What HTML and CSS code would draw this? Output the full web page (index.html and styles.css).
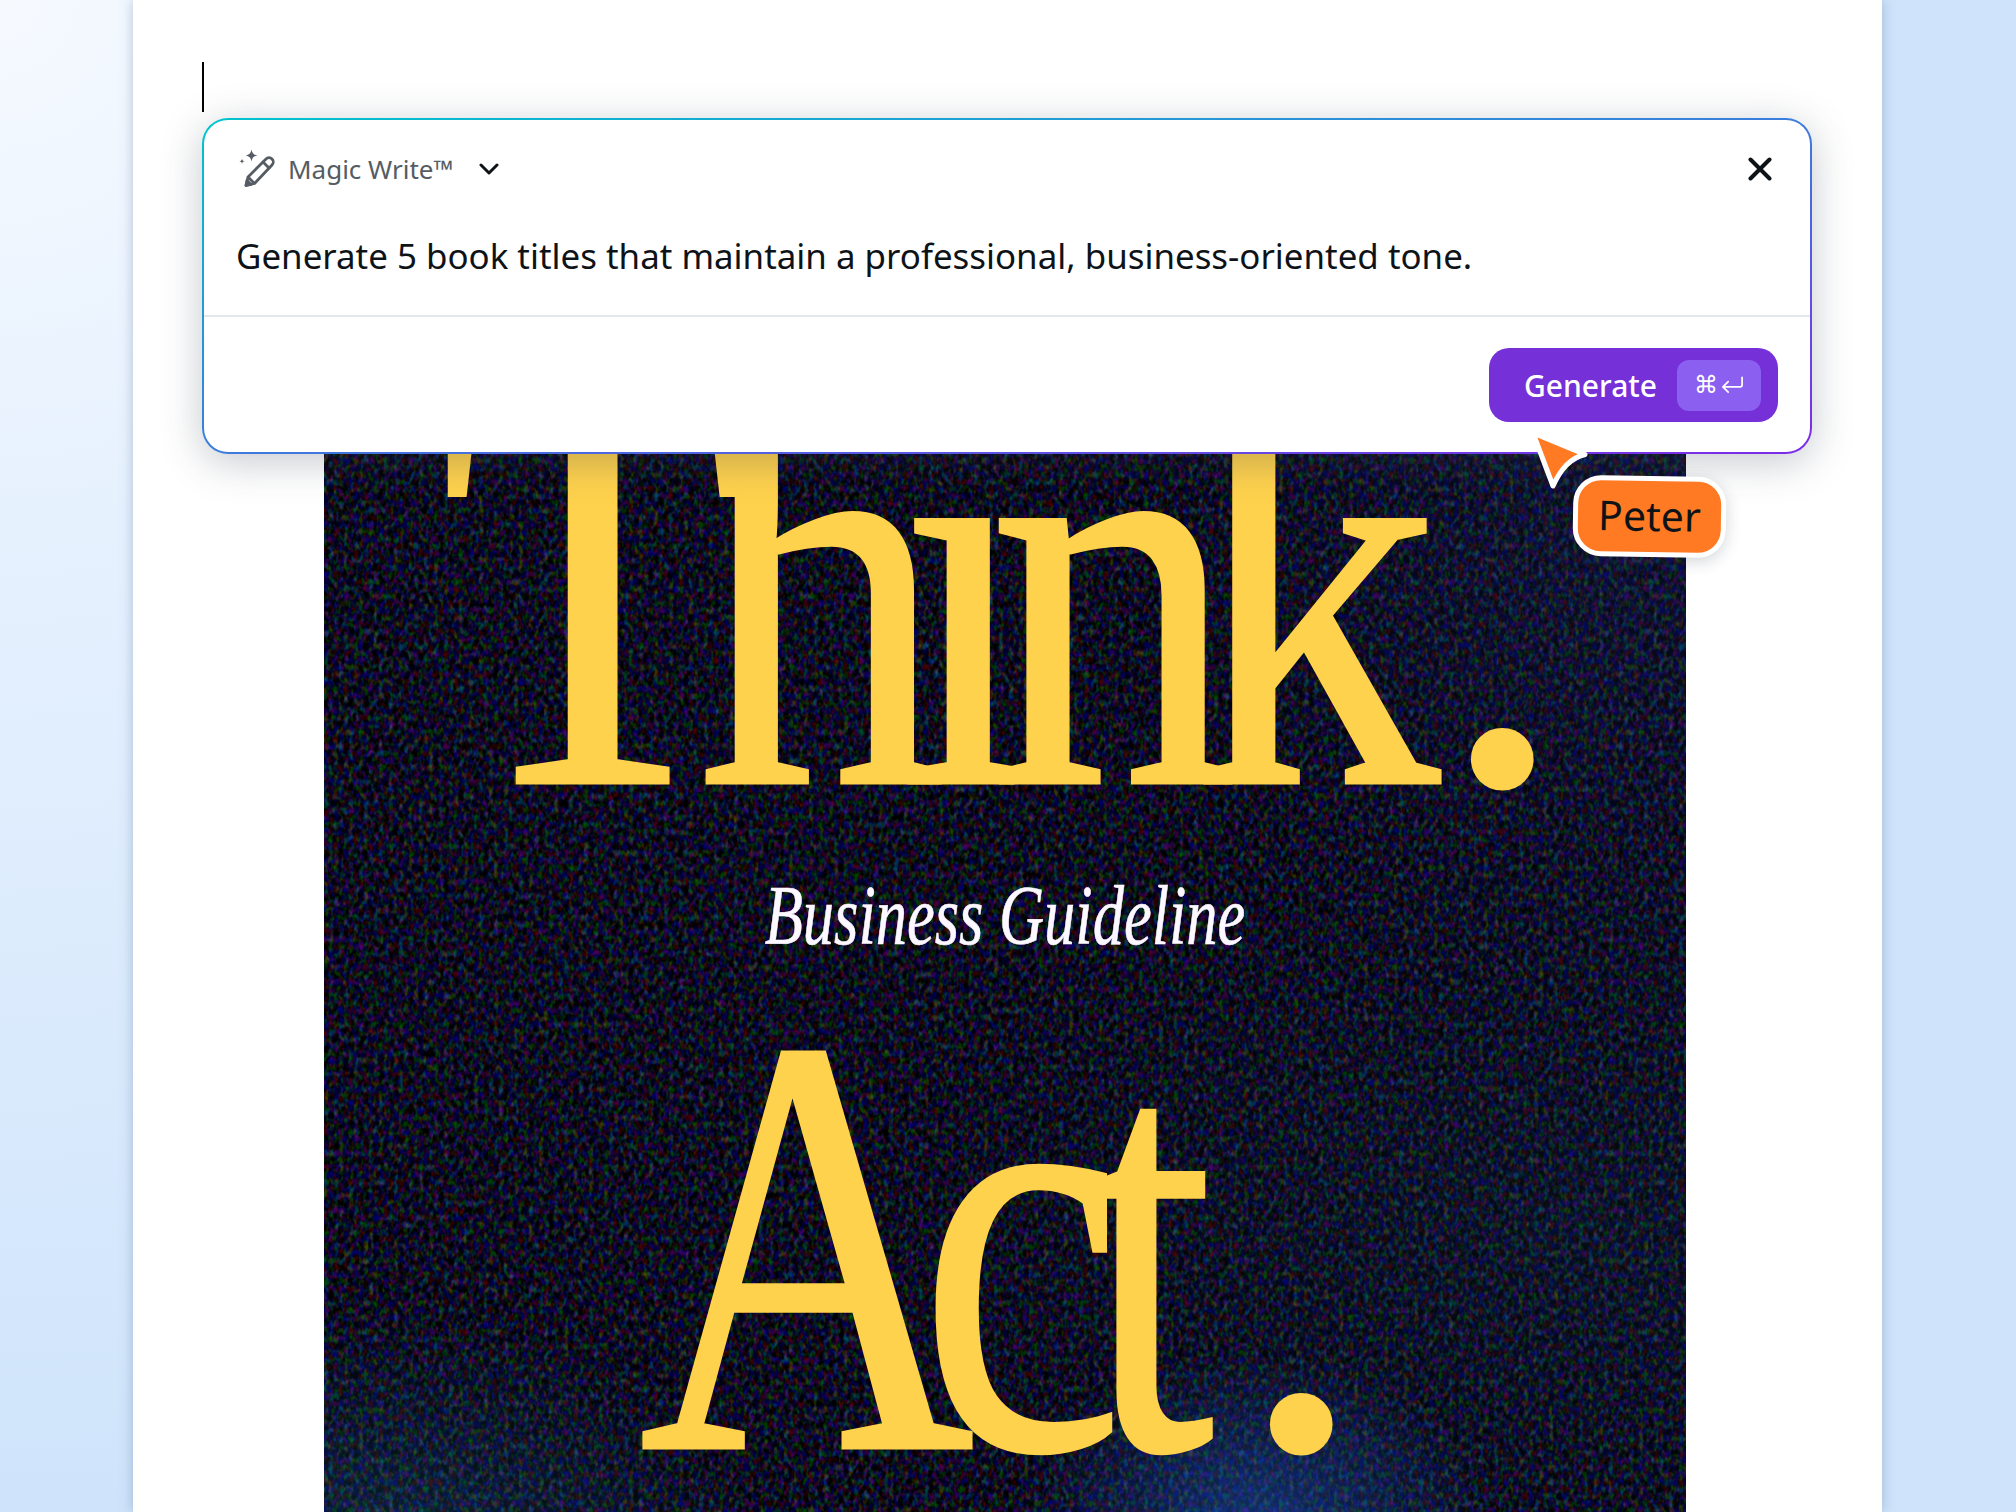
FILE: index.html
```html
<!DOCTYPE html>
<html lang="en">
<head>
<meta charset="utf-8">
<title>Magic Write</title>
<link rel="stylesheet" href="styles.css">
</head>
<body>
<main class="sheet">
  <div class="caret"></div>
  <section class="card">
    <header class="card-head">
      <div class="tool">
        <svg class="wand" viewBox="0 0 40 40" fill="none" stroke="#555c63" stroke-width="2.800" stroke-linejoin="round" stroke-linecap="round">
          <path d="M9 36.500l2-8.500L29 10a4.200 4.200 0 0 1 6 6L17.500 34.500z"/>
          <path d="M26 13l6 6M11.500 28.500l5.500 5.500"/>
          <path d="M9 36.500l1-5 4 4z" fill="#555c63"/>
          <path d="M14.500 0.500c.8 4 2.200 5.300 6 6-3.800.7-5.200 2-6 6-.8-4-2.200-5.300-6-6 3.800-.7 5.200-2 6-6z" fill="#555c63" stroke="none"/>
          <path d="M5 9.500c.3 1.900.9 2.500 2.800 2.800-1.900.3-2.500.9-2.800 2.800-.3-1.900-.9-2.500-2.800-2.800 1.900-.3 2.500-.9 2.800-2.800z" fill="#555c63" stroke="none"/>
        </svg>
        <span class="tool-name">Magic Write™</span>
        <svg class="chevron" viewBox="0 0 20 14" fill="none" stroke="#0e1318" stroke-width="3" stroke-linecap="round" stroke-linejoin="round"><path d="M2 3l8 8 8-8"/></svg>
      </div>
      <svg class="close" viewBox="0 0 24 24" fill="none" stroke="#0e1318" stroke-width="4" stroke-linecap="round"><path d="M2.500 2.500l19 19M21.500 2.500l-19 19"/></svg>
    </header>
    <p class="prompt">Generate 5 book titles that maintain a professional, business-oriented tone.</p>
    <div class="divider"></div>
    <footer class="card-foot">
      <button class="generate">
        <span>Generate</span>
        <span class="shortcut">
          <span class="cmd">⌘</span>
          <svg class="enter" viewBox="0 0 24 18" fill="none" stroke="#fff" stroke-width="1.800" stroke-linecap="round" stroke-linejoin="round"><path d="M22 1v8a2 2 0 0 1-2 2H2M7.500 5.500L2 11l5.500 5.500"/></svg>
        </span>
      </button>
    </footer>
  </section>
  <section class="book">
    <svg class="noise" xmlns="http://www.w3.org/2000/svg" width="100%" height="100%">
      <filter id="grain" x="0" y="0" width="100%" height="100%" color-interpolation-filters="sRGB">
        <feTurbulence type="fractalNoise" baseFrequency="0.2 0.14" numOctaves="2" seed="7"/>
        <feColorMatrix type="matrix" values="0.750 0 0 0 -0.335  0 0.750 0 0 -0.335  0 0 0.950 0 -0.345  0 0 0 0 1"/>
      </filter>
      <rect width="100%" height="100%" fill="#000" filter="url(#grain)"/>
    </svg>
    <div class="glow"></div>
    <div class="title title-think"><span class="word">Th<span class="stem">i</span>nk</span><span class="dot">.</span></div>
    <div class="subtitle">Business Guideline</div>
    <div class="title title-act"><span class="word"><span class="kern-a">A</span>ct</span><span class="dot">.</span></div>
  </section>
  <div class="cursor">
    <svg class="pointer" viewBox="0 0 60 60"><path d="M3 3L55 24.500Q35 29 23 56Z" fill="#ff7a23" stroke="#fff" stroke-width="5" stroke-linejoin="round"/></svg>
    <div class="cursor-label">Peter</div>
  </div>
</main>
</body>
</html>
```
FILE: styles.css
```css
* { box-sizing: border-box; }
html, body { margin: 0; height: 100%; }
body {
  width: 2016px;
  height: 1512px;
  overflow: hidden;
  background: radial-gradient(circle 1500px at 0 0, #f6faff 0%, #e6f1fe 35%, #cfe4fb 100%);
  font-family: "Noto Sans", sans-serif;
}
.sheet {
  position: relative;
  width: 1749px;
  height: 1512px;
  margin-left: 133px;
  padding: 62px 69px 0;
  background: #fff;
  box-shadow: 0 0 12px rgba(70, 100, 140, .35);
}
.caret { width: 2px; height: 50px; background: #000; }
.card {
  position: relative;
  z-index: 2;
  width: 1610px;
  height: 336px;
  margin-top: 6px;
  border: 2px solid transparent;
  border-radius: 26px;
  background:
    linear-gradient(#fff, #fff) padding-box,
    linear-gradient(to bottom right, #00c4cc 0%, #3c7cdd 50%, #7d2ae8 100%) border-box;
  box-shadow: 0 8px 40px rgba(50, 60, 80, .28);
  display: flex;
  flex-direction: column;
}
.card-head {
  display: flex;
  align-items: center;
  justify-content: space-between;
  height: 76px;
  padding: 0 38px 0 33px;
  margin-top: 11px;
  flex: none;
}
.tool { display: flex; align-items: center; }
.wand { width: 40px; height: 40px; }
.tool-name { margin-left: 11px; font-size: 26px; color: #555c63; }
.chevron { width: 20px; height: 14px; margin-left: 25px; }
.close { width: 24px; height: 24px; }
.prompt {
  margin: 0;
  padding: 0 32px;
  font-size: 34.900px;
  line-height: 46px;
  color: #0e1318;
  height: 65px;
  margin-top: 26px;
  flex: none;
}
.divider { height: 2px; background: #e3e6ea; flex: none; margin-top: 17px; }
.card-foot { display: flex; justify-content: flex-end; padding: 31px 32px 0 0; }
.generate {
  display: flex;
  align-items: center;
  justify-content: space-between;
  width: 289px;
  height: 74px;
  padding: 0 17px 0 35px;
  border: 0;
  border-radius: 20px;
  background: #7630d8;
  color: #fff;
  font: 500 30px "Noto Sans", sans-serif;
}
.shortcut {
  display: flex;
  align-items: center;
  justify-content: center;
  gap: 3px;
  width: 84px;
  height: 51px;
  border-radius: 12px;
  background: #8b5fef;
}
.cmd { font: 24px "DejaVu Sans", sans-serif; }
.enter { width: 23px; height: 18px; }
.book {
  position: relative;
  z-index: 1;
  width: 1362px;
  height: 1226px;
  margin: -168px 0 0 122px;
  background: #05052a;
  overflow: hidden;
  font-family: "Liberation Serif", serif;
  font-kerning: none;
}
.noise { position: absolute; inset: 0; }
.glow {
  position: absolute;
  inset: 0;
  background:
    radial-gradient(240px 170px at 930px 1235px, rgba(30, 90, 190, .5), transparent 100%),
    radial-gradient(400px 280px at 60px 1300px, rgba(30, 110, 150, .32), transparent 100%),
    radial-gradient(500px 500px at 1300px 250px, rgba(30, 50, 110, .24), transparent 100%),
    radial-gradient(700px 400px at 1250px 950px, rgba(20, 60, 90, .2), transparent 100%);
}
.title {
  position: relative;
  display: flex;
  align-items: baseline;
  height: 596px;
  font-size: 596px;
  line-height: 596px;
  color: #ffd24d;
  white-space: nowrap;
}
.word { display: block; transform-origin: left center; -webkit-text-stroke: 3px #ffd24d; }
.stem { display: inline-block; clip-path: inset(205px -30px 0 -30px); }
.dot { font-size: 530px; }
.title-think { padding-left: 116px; margin-top: 6px; font-size: 574px; }
.title-think .word { width: 996px; letter-spacing: -56px; transform: scaleX(.872); }
.title-act { padding-left: 315px; margin-top: -17px; font-size: 600px; }
.title-act .word { width: 596px; letter-spacing: -52px; transform: scaleX(.775); }
.kern-a { letter-spacing: -72px; }
.subtitle {
  position: relative;
  margin-top: -23px;
  height: 100px;
  font-size: 85px;
  line-height: 100px;
  font-style: italic;
  text-align: center;
  color: #fdf8ff;
  white-space: nowrap;
  transform: scaleX(.735);
  -webkit-text-stroke: .6px #fdf8ff;
}
.cursor { position: absolute; z-index: 3; left: 1397px; top: 430px; }
.pointer { display: block; width: 60px; height: 60px; overflow: visible; }
.cursor-label {
  position: absolute;
  left: 43px;
  top: 46px;
  width: 153px;
  height: 81px;
  border: 5px solid #fff;
  border-radius: 28px;
  background: #ff7a23;
  color: #0e1318;
  font-size: 41px;
  line-height: 69px;
  text-align: center;
  transform: rotate(1deg);
  box-shadow: 0 4px 16px rgba(40, 50, 70, .2);
}
```
